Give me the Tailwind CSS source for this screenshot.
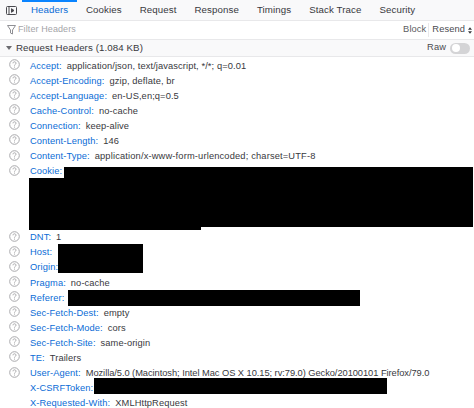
<!DOCTYPE html>
<html lang="en">
<head>
    <meta charset="UTF-8">
    <title>Request Headers</title>
    <script src="https://cdn.jsdelivr.net/npm/@tailwindcss/browser@4"></script>
</head>
<body class="w-[474px] h-[408px] overflow-hidden bg-white font-['Liberation_Sans',sans-serif] text-[9.3px] tracking-[0.1px] whitespace-nowrap text-[#38383d]">
    <!-- Tabs -->
    <div class="relative h-[21px] bg-[#f9f9fa] border-b border-[#e8e8ea] flex items-center text-[9.7px] pt-[1px]">
        <div class="absolute left-[22px] top-0 w-[55px] h-[2px] bg-[#0a84ff]"></div>
        <svg class="ml-[6px] mr-[14px] w-[11px] h-[9px]" viewBox="0 0 11 9" fill="none" stroke="#4a4a4f" stroke-width="1"><rect x="0.500" y="0.500" width="10" height="8" rx="1"/><path d="M3 1v7"/><path d="M5.500 2.700l2.500 1.800-2.500 1.800z" fill="#4a4a4f"/></svg>
        <span class="text-[#0a6cd6] w-[55px]">Headers</span>
        <span>Cookies</span>
        <span class="ml-[18px]">Request</span>
        <span class="ml-[18px]">Response</span>
        <span class="ml-[18px]">Timings</span>
        <span class="ml-[18px]">Stack Trace</span>
        <span class="ml-[18px]">Security</span>
    </div>
    <!-- Filter -->
    <div class="h-[19px] border-b border-[#e8e8ea] flex items-center">
        <svg class="ml-[7px] mr-[2px] w-[9px] h-[10px]" viewBox="0 0 9 10" fill="none" stroke="#8f8f94" stroke-width="1"><path d="M0.500 0.500h8L5.500 5v4L3.500 8V5z"/></svg>
        <span class="text-[#a4a4a8] text-[9px]">Filter Headers</span>
        <span class="ml-auto text-[#5c5c61] pr-[2px] border-r border-[#e8e8ea] mr-[3px]">Block</span>
        <span class="text-[#4a4a4f]">Resend</span>
        <svg class="ml-[3px] mr-[2px] w-[4px] h-[7px]" viewBox="0 0 5 8" fill="#38383d"><path d="M2.500 0L5 3H0zM2.500 8L0 5h5z"/></svg>
    </div>
    <!-- Section title -->
    <div class="h-[17px] bg-[#f9f9fa] border-b border-[#e8e8ea] flex items-center text-[9.7px]">
        <svg class="ml-[6px] mr-[4px] w-[6px] h-[4px]" viewBox="0 0 6 4" fill="#6b6b70"><path d="M0 0h6L3 4z"/></svg>
        <span>Request Headers (1.084 KB)</span>
        <span class="ml-auto text-[9.3px] text-[#4a4a4f]">Raw</span>
        <div class="ml-[4px] mr-[4px] w-[20px] h-[11px] rounded-full bg-[#d4d4d6] p-[1.5px]"><div class="w-[8px] h-[8px] rounded-full bg-white"></div></div>
    </div>
    <!-- Header rows -->
    <div class="pt-[2px]">
        <div class="relative h-[15.1px] flex items-center pl-[30px]"><svg class="absolute left-[9px] top-0 w-[11px] h-[11px]" viewBox="0 0 11 11" fill="none" stroke="#a8a8ab"><circle cx="5.500" cy="5.500" r="4.800"/><path d="M4 4.300c0-2 3-2 3 0 0 1-1.500 1-1.500 2.300M5.500 7.600v1"/></svg><span class="text-[#0a6cd6] mr-[5px]">Accept:</span><span>application/json, text/javascript, */*; q=0.01</span></div>
        <div class="relative h-[15.1px] flex items-center pl-[30px]"><svg class="absolute left-[9px] top-0 w-[11px] h-[11px]" viewBox="0 0 11 11" fill="none" stroke="#a8a8ab"><circle cx="5.500" cy="5.500" r="4.800"/><path d="M4 4.300c0-2 3-2 3 0 0 1-1.500 1-1.500 2.300M5.500 7.600v1"/></svg><span class="text-[#0a6cd6] mr-[5px]">Accept-Encoding:</span><span>gzip, deflate, br</span></div>
        <div class="relative h-[15.1px] flex items-center pl-[30px]"><svg class="absolute left-[9px] top-0 w-[11px] h-[11px]" viewBox="0 0 11 11" fill="none" stroke="#a8a8ab"><circle cx="5.500" cy="5.500" r="4.800"/><path d="M4 4.300c0-2 3-2 3 0 0 1-1.500 1-1.500 2.300M5.500 7.600v1"/></svg><span class="text-[#0a6cd6] mr-[5px]">Accept-Language:</span><span>en-US,en;q=0.5</span></div>
        <div class="relative h-[15.1px] flex items-center pl-[30px]"><svg class="absolute left-[9px] top-0 w-[11px] h-[11px]" viewBox="0 0 11 11" fill="none" stroke="#a8a8ab"><circle cx="5.500" cy="5.500" r="4.800"/><path d="M4 4.300c0-2 3-2 3 0 0 1-1.500 1-1.500 2.300M5.500 7.600v1"/></svg><span class="text-[#0a6cd6] mr-[5px]">Cache-Control:</span><span>no-cache</span></div>
        <div class="relative h-[15.1px] flex items-center pl-[30px]"><svg class="absolute left-[9px] top-0 w-[11px] h-[11px]" viewBox="0 0 11 11" fill="none" stroke="#a8a8ab"><circle cx="5.500" cy="5.500" r="4.800"/><path d="M4 4.300c0-2 3-2 3 0 0 1-1.500 1-1.500 2.300M5.500 7.600v1"/></svg><span class="text-[#0a6cd6] mr-[5px]">Connection:</span><span>keep-alive</span></div>
        <div class="relative h-[15.1px] flex items-center pl-[30px]"><svg class="absolute left-[9px] top-0 w-[11px] h-[11px]" viewBox="0 0 11 11" fill="none" stroke="#a8a8ab"><circle cx="5.500" cy="5.500" r="4.800"/><path d="M4 4.300c0-2 3-2 3 0 0 1-1.500 1-1.500 2.300M5.500 7.600v1"/></svg><span class="text-[#0a6cd6] mr-[5px]">Content-Length:</span><span>146</span></div>
        <div class="relative h-[15.1px] flex items-center pl-[30px]"><svg class="absolute left-[9px] top-0 w-[11px] h-[11px]" viewBox="0 0 11 11" fill="none" stroke="#a8a8ab"><circle cx="5.500" cy="5.500" r="4.800"/><path d="M4 4.300c0-2 3-2 3 0 0 1-1.500 1-1.500 2.300M5.500 7.600v1"/></svg><span class="text-[#0a6cd6] mr-[5px]">Content-Type:</span><span class="tracking-[0.16px]">application/x-www-form-urlencoded; charset=UTF-8</span></div>
        <!-- Cookie, redacted -->
        <div class="relative h-[66px] pl-[30px]">
            <svg class="absolute left-[9px] top-0 w-[11px] h-[11px]" viewBox="0 0 11 11" fill="none" stroke="#a8a8ab"><circle cx="5.500" cy="5.500" r="4.800"/><path d="M4 4.300c0-2 3-2 3 0 0 1-1.500 1-1.500 2.300M5.500 7.600v1"/></svg>
            <span class="text-[#0a6cd6]">Cookie:</span>
            <div class="absolute left-[64px] top-[2px] w-[409px] h-[60px] bg-black"></div>
            <div class="absolute left-[29px] top-[13px] w-[172px] h-[52px] bg-black"></div>
        </div>
        <div class="relative h-[15.1px] flex items-center pl-[30px]"><svg class="absolute left-[9px] top-0 w-[11px] h-[11px]" viewBox="0 0 11 11" fill="none" stroke="#a8a8ab"><circle cx="5.500" cy="5.500" r="4.800"/><path d="M4 4.300c0-2 3-2 3 0 0 1-1.500 1-1.500 2.300M5.500 7.600v1"/></svg><span class="text-[#0a6cd6] mr-[5px]">DNT:</span><span>1</span></div>
        <div class="relative h-[15.1px] flex items-center pl-[30px]"><svg class="absolute left-[9px] top-0 w-[11px] h-[11px]" viewBox="0 0 11 11" fill="none" stroke="#a8a8ab"><circle cx="5.500" cy="5.500" r="4.800"/><path d="M4 4.300c0-2 3-2 3 0 0 1-1.500 1-1.500 2.300M5.500 7.600v1"/></svg><span class="text-[#0a6cd6]">Host:</span></div>
        <div class="relative h-[15.1px] flex items-center pl-[30px]"><svg class="absolute left-[9px] top-0 w-[11px] h-[11px]" viewBox="0 0 11 11" fill="none" stroke="#a8a8ab"><circle cx="5.500" cy="5.500" r="4.800"/><path d="M4 4.300c0-2 3-2 3 0 0 1-1.500 1-1.500 2.300M5.500 7.600v1"/></svg><span class="text-[#0a6cd6]">Origin:</span>
            <div class="absolute left-[58px] top-[-17px] w-[85px] h-[29px] bg-black"></div>
        </div>
        <div class="relative h-[15.1px] flex items-center pl-[30px]"><svg class="absolute left-[9px] top-0 w-[11px] h-[11px]" viewBox="0 0 11 11" fill="none" stroke="#a8a8ab"><circle cx="5.500" cy="5.500" r="4.800"/><path d="M4 4.300c0-2 3-2 3 0 0 1-1.500 1-1.500 2.300M5.500 7.600v1"/></svg><span class="text-[#0a6cd6] mr-[5px]">Pragma:</span><span>no-cache</span></div>
        <div class="relative h-[15.1px] flex items-center pl-[30px]"><svg class="absolute left-[9px] top-0 w-[11px] h-[11px]" viewBox="0 0 11 11" fill="none" stroke="#a8a8ab"><circle cx="5.500" cy="5.500" r="4.800"/><path d="M4 4.300c0-2 3-2 3 0 0 1-1.500 1-1.500 2.300M5.500 7.600v1"/></svg><span class="text-[#0a6cd6]">Referer:</span>
            <div class="absolute left-[68px] top-[-1px] w-[292px] h-[16px] bg-black"></div>
        </div>
        <div class="relative h-[15.1px] flex items-center pl-[30px]"><svg class="absolute left-[9px] top-0 w-[11px] h-[11px]" viewBox="0 0 11 11" fill="none" stroke="#a8a8ab"><circle cx="5.500" cy="5.500" r="4.800"/><path d="M4 4.300c0-2 3-2 3 0 0 1-1.500 1-1.500 2.300M5.500 7.600v1"/></svg><span class="text-[#0a6cd6] mr-[5px]">Sec-Fetch-Dest:</span><span>empty</span></div>
        <div class="relative h-[15.1px] flex items-center pl-[30px]"><svg class="absolute left-[9px] top-0 w-[11px] h-[11px]" viewBox="0 0 11 11" fill="none" stroke="#a8a8ab"><circle cx="5.500" cy="5.500" r="4.800"/><path d="M4 4.300c0-2 3-2 3 0 0 1-1.500 1-1.500 2.300M5.500 7.600v1"/></svg><span class="text-[#0a6cd6] mr-[5px]">Sec-Fetch-Mode:</span><span>cors</span></div>
        <div class="relative h-[15.1px] flex items-center pl-[30px]"><svg class="absolute left-[9px] top-0 w-[11px] h-[11px]" viewBox="0 0 11 11" fill="none" stroke="#a8a8ab"><circle cx="5.500" cy="5.500" r="4.800"/><path d="M4 4.300c0-2 3-2 3 0 0 1-1.500 1-1.500 2.300M5.500 7.600v1"/></svg><span class="text-[#0a6cd6] mr-[5px]">Sec-Fetch-Site:</span><span>same-origin</span></div>
        <div class="relative h-[15.1px] flex items-center pl-[30px]"><svg class="absolute left-[9px] top-0 w-[11px] h-[11px]" viewBox="0 0 11 11" fill="none" stroke="#a8a8ab"><circle cx="5.500" cy="5.500" r="4.800"/><path d="M4 4.300c0-2 3-2 3 0 0 1-1.500 1-1.500 2.300M5.500 7.600v1"/></svg><span class="text-[#0a6cd6] mr-[5px]">TE:</span><span>Trailers</span></div>
        <div class="relative h-[15.1px] flex items-center pl-[30px]"><svg class="absolute left-[9px] top-0 w-[11px] h-[11px]" viewBox="0 0 11 11" fill="none" stroke="#a8a8ab"><circle cx="5.500" cy="5.500" r="4.800"/><path d="M4 4.300c0-2 3-2 3 0 0 1-1.500 1-1.500 2.300M5.500 7.600v1"/></svg><span class="text-[#0a6cd6] mr-[5px]">User-Agent:</span><span class="tracking-[-0.05px]">Mozilla/5.0 (Macintosh; Intel Mac OS X 10.15; rv:79.0) Gecko/20100101 Firefox/79.0</span></div>
        <div class="relative h-[15.1px] flex items-center pl-[30px]"><span class="text-[#0a6cd6]">X-CSRFToken:</span>
            <div class="absolute left-[94px] top-[-4px] w-[293px] h-[16px] bg-black"></div>
        </div>
        <div class="relative h-[15.1px] flex items-center pl-[30px]"><span class="text-[#0a6cd6] mr-[5px]">X-Requested-With:</span><span>XMLHttpRequest</span></div>
    </div>
</body>
</html>
